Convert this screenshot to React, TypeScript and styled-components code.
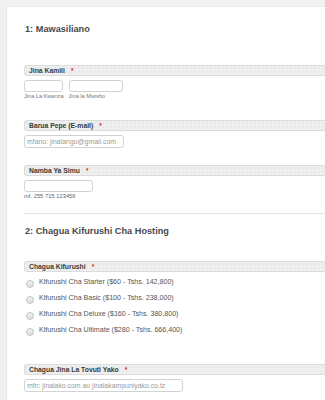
import React from "react";
import styled, { createGlobalStyle } from "styled-components";

const Global = createGlobalStyle`
  html, body { margin: 0; padding: 0; background: #f1f1f1; overflow: hidden; }
  body { font-family: "Liberation Sans", Arial, sans-serif; }
`;

const Page = styled.div`
  width: 325px;
  height: 400px;
  overflow: hidden;
  padding: 6px 0 0 6px;
  box-sizing: border-box;
`;

const Card = styled.div`
  width: 360px;
  min-height: 420px;
  background: #fff;
  border-left: 1px solid #e6e6e6;
  border-top: 1px solid #e9e9e9;
  box-sizing: border-box;
  padding: 16px 0 0 17px;
`;

const Heading = styled.h2<{ $top?: number }>`
  margin: ${(p) => p.$top ?? 0}px 0 0 1px;
  font-size: 9.2px;
  line-height: 12px;
  font-weight: bold;
  color: #4a4a4a;
`;

const Field = styled.div<{ $top: number }>`
  margin-top: ${(p) => p.$top}px;
  display: flex;
  flex-direction: column;
`;

const LabelBar = styled.div`
  height: 11px;
  box-sizing: border-box;
  border: 1px solid #dcdcdc;
  border-right: none;
  border-radius: 3px 0 0 3px;
  background-color: #efefef;
  background-image: radial-gradient(circle, #e0e0e0 0.6px, transparent 0.8px);
  background-size: 4px 4px;
  display: flex;
  align-items: center;
  padding-left: 4px;
  font-size: 6.8px;
  font-weight: bold;
  color: #3a3a3a;
  white-space: nowrap;
`;

const Star = styled.span`
  color: #e02020;
  margin-left: 6px;
  font-size: 6.5px;
`;

const Row = styled.div`
  display: flex;
  gap: 5px;
  margin-top: 4px;
`;

const Col = styled.div`
  display: flex;
  flex-direction: column;
`;

const Input = styled.div<{ $w: number; $h?: number }>`
  width: ${(p) => p.$w}px;
  height: ${(p) => p.$h ?? 12}px;
  box-sizing: border-box;
  border: 1px solid #d2d2d2;
  border-radius: 3px;
  background: #fff;
  font-size: 6.9px;
  color: #9a9a9a;
  display: flex;
  align-items: center;
  padding-left: 2px;
  white-space: nowrap;
  overflow: hidden;
`;

const Sub = styled.div`
  font-size: 5.6px;
  line-height: 7px;
  color: #777;
  margin-top: 1px;
  white-space: nowrap;
`;

const Hint = styled.div`
  font-size: 5.8px;
  line-height: 7px;
  color: #666;
  margin-top: 1px;
  white-space: nowrap;
`;

const Divider = styled.hr`
  margin: 13px 0 0 0;
  border: none;
  border-top: 1px solid #e4e4e4;
  height: 0;
`;

const Options = styled.div`
  display: flex;
  flex-direction: column;
  margin-top: 2px;
`;

const Option = styled.label`
  height: 16px;
  display: flex;
  align-items: center;
  gap: 5px;
  padding-left: 2px;
  font-size: 7.1px;
  color: #555;
  white-space: nowrap;
`;

const Radio = styled.span`
  width: 6px;
  height: 6px;
  margin-top: 3px;
  border-radius: 50%;
  border: 1px solid #c4c4c4;
  background: linear-gradient(#f4f4f4, #d9d9d9);
  flex: none;
`;

const options = [
  "Kifurushi Cha Starter ($60 - Tshs. 142,800)",
  "Kifurushi Cha Basic ($100 - Tshs. 238,000)",
  "Kifurushi Cha Deluxe ($160 - Tshs. 380,800)",
  "Kifurushi Cha Ultimate ($280 - Tshs. 666,400)",
];

export default function App() {
  return (
    <Page>
      <Global />
      <Card>
        <Heading>1: Mawasiliano</Heading>

        <Field $top={30}>
          <LabelBar>
            Jina Kamili<Star>*</Star>
          </LabelBar>
          <Row>
            <Col>
              <Input $w={39} />
              <Sub>Jina La Kwanza</Sub>
            </Col>
            <Col>
              <Input $w={54} />
              <Sub>Jina la Mwisho</Sub>
            </Col>
          </Row>
        </Field>

        <Field $top={20}>
          <LabelBar>
            Barua Pepe (E-mail)<Star>*</Star>
          </LabelBar>
          <Row>
            <Input $w={100} $h={13}>mfano: jinalangu@gmail.com</Input>
          </Row>
        </Field>

        <Field $top={17}>
          <LabelBar>
            Namba Ya Simu<Star>*</Star>
          </LabelBar>
          <Row>
            <Col>
              <Input $w={69} />
              <Hint>mf. 255 715 123456</Hint>
            </Col>
          </Row>
        </Field>

        <Divider />

        <Heading $top={11}>2: Chagua Kifurushi Cha Hosting</Heading>

        <Field $top={24}>
          <LabelBar>
            Chagua Kifurushi<Star>*</Star>
          </LabelBar>
          <Options>
            {options.map((o) => (
              <Option key={o}>
                <Radio />
                {o}
              </Option>
            ))}
          </Options>
        </Field>

        <Field $top={26}>
          <LabelBar>
            Chagua Jina La Tovuti Yako<Star>*</Star>
          </LabelBar>
          <Row>
            <Input $w={159} $h={13}>mfn: jinalako.com au jinalakampuniyako.co.tz</Input>
          </Row>
        </Field>
      </Card>
    </Page>
  );
}
